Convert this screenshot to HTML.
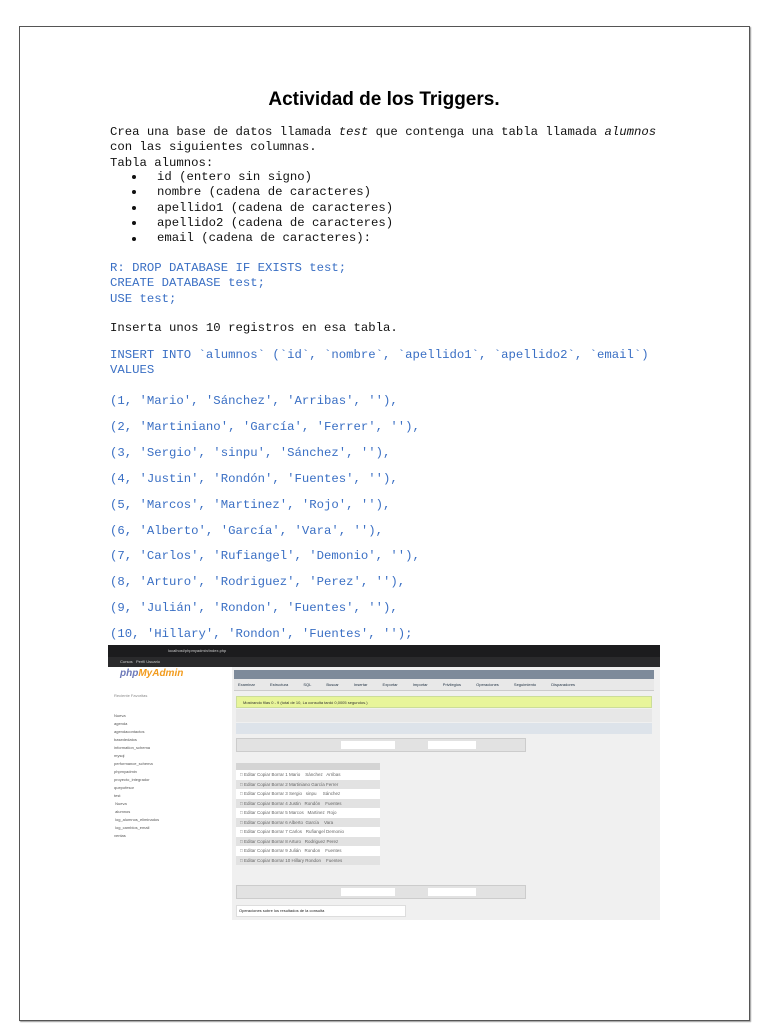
<!DOCTYPE html>
<html><head><meta charset="utf-8">
<style>
*{margin:0;padding:0;box-sizing:border-box}
body{width:768px;height:1024px;background:#fff;position:relative;overflow:hidden;font-family:"Liberation Mono",monospace}
.frame{position:absolute;left:19px;top:26px;width:731px;height:995px;border:1px solid #555;box-shadow:1px 1px 1px #999}
.t{position:absolute;left:110px;font-size:12.3px;color:#111;white-space:pre;line-height:15.3px}
.b{color:#3a6fc4}
h1{position:absolute;left:0;width:768px;top:89px;text-align:center;font:bold 19px "Liberation Sans",sans-serif;color:#000}
.bul{position:absolute;left:132px;width:4px;height:4px;border-radius:50%;background:#111}
.ss{position:absolute;left:108px;top:645px;width:552px;height:275px;background:#f0f0f0;overflow:hidden;font-family:"Liberation Sans",sans-serif;font-size:4px;color:#555}
.ss div{position:absolute}
.r{left:128px;width:144px;height:9.5px;background:#fff;color:#666;padding:2px 4px;white-space:pre;font-size:4.5px}
.r.g{background:#e2e2e2}
</style></head><body>
<div class="frame"></div>
<h1>Actividad de los Triggers.</h1>
<div class="t" style="top:125px">Crea una base de datos llamada <i>test</i> que contenga una tabla llamada <i>alumnos</i>
con las siguientes columnas.
Tabla alumnos:</div>
<div class="bul" style="top:175px"></div><div class="bul" style="top:190px"></div><div class="bul" style="top:206px"></div><div class="bul" style="top:221px"></div><div class="bul" style="top:237px"></div>
<div class="t" style="top:170px;left:157px">id (entero sin signo)
nombre (cadena de caracteres)
apellido1 (cadena de caracteres)
apellido2 (cadena de caracteres)
email (cadena de caracteres):</div>
<div class="t b" style="top:261px">R: DROP DATABASE IF EXISTS test;
CREATE DATABASE test;
USE test;</div>
<div class="t" style="top:321px">Inserta unos 10 registros en esa tabla.</div>
<div class="t b" style="top:348px">INSERT INTO `alumnos` (`id`, `nombre`, `apellido1`, `apellido2`, `email`)
VALUES</div>
<div class="t b" style="top:389px;line-height:25.9px">(1, 'Mario', 'Sánchez', 'Arribas', ''),
(2, 'Martiniano', 'García', 'Ferrer', ''),
(3, 'Sergio', 'sinpu', 'Sánchez', ''),
(4, 'Justin', 'Rondón', 'Fuentes', ''),
(5, 'Marcos', 'Martinez', 'Rojo', ''),
(6, 'Alberto', 'García', 'Vara', ''),
(7, 'Carlos', 'Rufiangel', 'Demonio', ''),
(8, 'Arturo', 'Rodriguez', 'Perez', ''),
(9, 'Julián', 'Rondon', 'Fuentes', ''),
(10, 'Hillary', 'Rondon', 'Fuentes', '');</div>

<div class="ss">
<div style="left:0;top:0;width:552px;height:12px;background:#1c1c1e;color:#ccc;padding:3px 60px">localhost/phpmyadmin/index.php</div>
<div style="left:0;top:12px;width:552px;height:10px;background:#2a2a2c;color:#ccc;padding:2px 12px">Cursos &nbsp; Perfil Usuario</div>
<div style="left:0;top:22px;width:124px;height:253px;background:#fff"></div>
<div style="left:12px;top:23px;font:italic bold 10px 'Liberation Sans',sans-serif;color:#6c78b8">php<span style="color:#f29b1d">MyAdmin</span></div>
<div style="left:6px;top:48px;color:#888">Reciente Favoritas</div>
<div style="left:6px;top:67px;line-height:8px">Nueva<br>agenda<br>agendacontactos<br>basededatos<br>information_schema<br>mysql<br>performance_schema<br>phpmyadmin<br>proyecto_integrador<br>quepofesor<br>test<br>&nbsp;Nueva<br>&nbsp;alumnos<br>&nbsp;log_alumnos_eliminados<br>&nbsp;log_cambios_email<br>ventas</div>
<div style="left:126px;top:25px;width:420px;height:9px;background:#7d8a9a"></div>
<div style="left:126px;top:34px;width:420px;height:12px;background:#e8e8e8;border-bottom:1px solid #ccc;color:#234;padding:3px 4px;word-spacing:14px">Examinar Estructura SQL Buscar Insertar Exportar Importar Privilegios Operaciones Seguimiento Disparadores</div>
<div style="left:128px;top:51px;width:416px;height:12px;background:#e8f59a;border:1px solid #cd9;padding:3px 6px;color:#333">Mostrando filas 0 - 9 (total de 10, La consulta tardó 0,0005 segundos.)</div>
<div style="left:128px;top:64px;width:416px;height:13px;background:#e7e7e7"></div>
<div style="left:128px;top:78px;width:416px;height:11px;background:#dde3ea"></div>
<div style="left:128px;top:93px;width:290px;height:14px;background:#e2e2e2;border:1px solid #ccc"></div>
<div style="left:233px;top:96px;width:54px;height:8px;background:#fff"></div>
<div style="left:320px;top:96px;width:48px;height:8px;background:#fff"></div>
<div style="left:128px;top:118px;width:144px;height:7px;background:#d4d4d4"></div>
<div class="r" style="top:125px">□ Editar Copiar Borrar 1 Mario    Sánchez   Arribas</div>
<div class="r g" style="top:134.5px">□ Editar Copiar Borrar 2 Martiniano García Ferrer</div>
<div class="r" style="top:144px">□ Editar Copiar Borrar 3 Sergio   sinpu     Sánchez</div>
<div class="r g" style="top:153.5px">□ Editar Copiar Borrar 4 Justin   Rondón    Fuentes</div>
<div class="r" style="top:163px">□ Editar Copiar Borrar 5 Marcos   Martinez  Rojo</div>
<div class="r g" style="top:172.5px">□ Editar Copiar Borrar 6 Alberto  García    Vara</div>
<div class="r" style="top:182px">□ Editar Copiar Borrar 7 Carlos   Rufiangel Demonio</div>
<div class="r g" style="top:191.5px">□ Editar Copiar Borrar 8 Arturo   Rodriguez Perez</div>
<div class="r" style="top:201px">□ Editar Copiar Borrar 9 Julián   Rondon    Fuentes</div>
<div class="r g" style="top:210.5px">□ Editar Copiar Borrar 10 Hillary Rondon    Fuentes</div>
<div style="left:128px;top:240px;width:290px;height:14px;background:#e2e2e2;border:1px solid #ccc"></div>
<div style="left:233px;top:243px;width:54px;height:8px;background:#fff"></div>
<div style="left:320px;top:243px;width:48px;height:8px;background:#fff"></div>
<div style="left:128px;top:260px;width:170px;height:12px;background:#fff;border:1px solid #ddd;color:#222;padding:2px">Operaciones sobre los resultados de la consulta</div>
</div>
</body></html>
